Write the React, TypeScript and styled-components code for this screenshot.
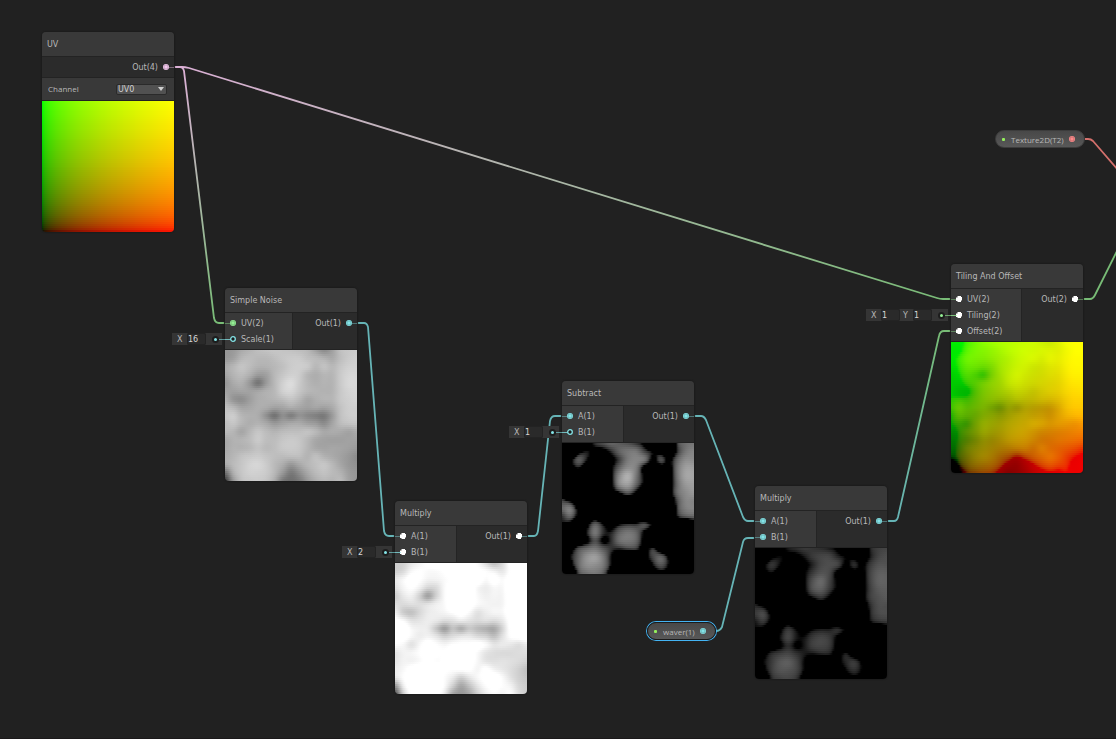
import React, { useId, useMemo } from "react";
import styled, { createGlobalStyle, css } from "styled-components";

const TEAL = "#84e4e7";
const GREEN = "#94ef94";
const PINK = "#f4c8ee";
const RED = "#ff8b8b";
const WHITE = "#ffffff";

const GlobalStyle = createGlobalStyle`
  * { box-sizing: border-box; }
  html, body { margin: 0; background: #212121; }
  body { overflow: hidden; }
  body, input, select {
    font-family: "DejaVu Sans", Verdana, sans-serif;
    font-size: 8px;
    line-height: 12px;
    color: #b8b8b8;
  }
`;

/* ---------- previews ---------- */

/* Noise height map: 17 x 17 lattice of display greys, top row first */
const LATTICE = [
  [150, 154, 170, 180, 190, 194, 198, 196, 194, 190, 184, 162, 140, 160, 192, 200, 202],
  [152, 160, 182, 188, 184, 184, 190, 198, 202, 202, 192, 186, 178, 170, 190, 202, 206],
  [170, 182, 196, 188, 178, 178, 184, 192, 203, 206, 202, 184, 194, 184, 198, 208, 208],
  [164, 180, 188, 176, 156, 160, 184, 198, 208, 204, 182, 174, 182, 182, 202, 214, 214],
  [150, 170, 176, 152, 118, 154, 184, 208, 220, 202, 184, 176, 180, 180, 202, 216, 216],
  [162, 160, 164, 162, 166, 176, 184, 208, 214, 198, 184, 180, 178, 180, 200, 212, 214],
  [176, 150, 142, 158, 172, 176, 180, 188, 196, 184, 166, 174, 180, 182, 200, 208, 212],
  [192, 184, 166, 168, 174, 170, 160, 164, 172, 166, 160, 164, 160, 170, 194, 206, 206],
  [198, 204, 182, 176, 172, 144, 114, 142, 126, 146, 136, 128, 122, 154, 192, 204, 206],
  [190, 198, 182, 174, 178, 168, 152, 162, 168, 170, 160, 154, 140, 164, 188, 196, 198],
  [186, 182, 166, 182, 197, 187, 180, 187, 190, 190, 194, 184, 168, 172, 170, 164, 172],
  [168, 178, 180, 188, 202, 190, 189, 198, 202, 198, 184, 168, 162, 160, 160, 162, 162],
  [168, 178, 178, 184, 194, 186, 190, 200, 202, 198, 182, 168, 164, 166, 164, 160, 154],
  [174, 182, 194, 200, 203, 196, 190, 188, 190, 190, 180, 191, 178, 170, 162, 152, 140],
  [168, 186, 198, 210, 214, 203, 186, 172, 152, 168, 182, 192, 198, 184, 166, 152, 144],
  [110, 174, 198, 208, 208, 202, 184, 152, 122, 142, 168, 186, 194, 186, 178, 158, 150],
  [60, 150, 192, 200, 202, 196, 172, 122, 110, 122, 152, 174, 184, 180, 186, 162, 150],
];

const clampIndex = (i: number) => Math.min(16, Math.max(0, i));

function cubic(a: number, b: number, c: number, d: number, t: number) {
  return b + 0.5 * t * (c - a + t * (2 * a - 5 * b + 4 * c - d + t * (3 * (b - c) + d - a)));
}

function toLinear(byte: number) {
  const c = byte / 255;
  return c <= 0.04045 ? c / 12.92 : Math.pow((c + 0.055) / 1.055, 2.4);
}

function toByte(linear: number) {
  const c = Math.min(1, Math.max(0, linear));
  const s = c <= 0.0031308 ? c * 12.92 : 1.055 * Math.pow(c, 1 / 2.4) - 0.055;
  return Math.round(s * 255);
}

function simpleNoise(u: number, v: number) {
  const x = u * 16;
  const y = (1 - v) * 16;
  const ix = Math.floor(x);
  const iy = Math.floor(y);
  const line = (j: number) => {
    const row = LATTICE[clampIndex(j)];
    return cubic(
      row[clampIndex(ix - 1)], row[clampIndex(ix)], row[clampIndex(ix + 1)], row[clampIndex(ix + 2)], x - ix,
    );
  };
  return toLinear(cubic(line(iy - 1), line(iy), line(iy + 1), line(iy + 2), y - iy));
}

type Shader = (u: number, v: number) => [number, number, number];
const WAVER = 0.32;
const grey = (n: number): [number, number, number] => [n, n, n];

const shaders: Record<string, Shader> = {
  uv: (u, v) => [u, v, 0],
  noise: (u, v) => grey(simpleNoise(u, v)),
  doubled: (u, v) => grey(simpleNoise(u, v) * 2),
  subtracted: (u, v) => grey(simpleNoise(u, v) * 2 - 1),
  waved: (u, v) => grey((simpleNoise(u, v) * 2 - 1) * WAVER),
  tiled: (u, v) => {
    const o = (simpleNoise(u, v) * 2 - 1) * WAVER;
    return [u + o, v + o, 0];
  },
};

const ROWS = 66;
const STOPS = 66;

const PreviewSvg = styled.svg`
  display: block;
  width: 100%;
  aspect-ratio: 132 / 131;
  border-radius: 0 0 4px 4px;
`;

function Preview({ shader }: { shader: string }) {
  const id = useId();
  const rows = useMemo(() => {
    const fn = shaders[shader];
    return Array.from({ length: ROWS }, (_, r) =>
      Array.from({ length: STOPS + 1 }, (_, s) => {
        const rgb = fn(s / STOPS, 1 - (r + 0.5) / ROWS).map(toByte);
        return `rgb(${rgb.join(",")})`;
      }),
    );
  }, [shader]);
  return (
    <PreviewSvg viewBox={`0 0 ${ROWS} ${ROWS}`} preserveAspectRatio="none" aria-hidden="true">
      <defs>
        {rows.map((stops, r) => (
          <linearGradient key={r} id={`${id}${r}`}>
            {stops.map((c, s) => (
              <stop key={s} offset={s / STOPS} stopColor={c} />
            ))}
          </linearGradient>
        ))}
      </defs>
      {rows.map((_, r) => (
        <rect key={r} y={r} width={ROWS} height="1" fill={`url(#${id}${r})`} shapeRendering="crispEdges" />
      ))}
    </PreviewSvg>
  );
}

/* ---------- ports ---------- */

type PortKind = "full" | "open" | "solid";

const PortSvg = styled.svg`
  display: block;
  flex: none;
  width: 8px;
  height: 8px;
`;

function Port({ color, kind = "full" }: { color: string; kind?: PortKind }) {
  return (
    <PortSvg viewBox="0 0 8 8" aria-hidden="true">
      {kind === "solid" && <path d="M2.500 1h3.500v1H7v3.500H6V7H2.500V6H1V2.500h1.500z" fill={color} />}
      {kind === "open" && <circle cx="4" cy="4" r="2.300" fill="#1c1c1c" stroke={color} strokeWidth="1.300" />}
      {kind === "full" && (
        <>
          <circle cx="4" cy="4" r="3" fill={color} />
          <circle cx="4" cy="4" r="2" fill="none" stroke="#222" strokeWidth="0.600" opacity="0.35" />
        </>
      )}
    </PortSvg>
  );
}

/* ---------- nodes ---------- */

const Canvas = styled.main`
  position: relative;
  min-height: 100vh;
  overflow: hidden;
  background: #212121;
  border-bottom: 1px solid #1b191a;
`;

const NodeBox = styled.section<{ $x: number; $y: number }>`
  position: absolute;
  left: ${(p) => p.$x}px;
  top: ${(p) => p.$y}px;
  width: 132px;
  border-radius: 4px;
  background: #2b2b2b;
  box-shadow: 0 0 1px 1px #1c1c1c;
`;

const NodeTitle = styled.h2`
  margin: 0;
  height: 24px;
  padding: 1px 5px 0;
  border-radius: 4px 4px 0 0;
  background: #393939;
  font-size: 8px;
  font-weight: 400;
  line-height: 24px;
`;

const PortArea = styled.div`
  display: flex;
  border-top: 1px solid #232323;
  border-bottom: 1px solid #232323;
`;

const InputColumn = styled.div<{ $width: number }>`
  width: ${(p) => p.$width}px;
  padding: 2px 4px;
  border-right: 1px solid #242424;
  background: #393939;
`;

const OutputColumn = styled.div`
  flex: 1;
  padding: 2px 4px;
`;

const PortRow = styled.div<{ $output?: boolean }>`
  position: relative;
  display: flex;
  align-items: center;
  gap: 4px;
  height: 16px;
  ${(p) => p.$output && css`justify-content: flex-end;`}
`;

const PortLabel = styled.span`
  padding-top: 2px;
`;

const Stub = styled.span<{ $color: string; $side: "left" | "right" }>`
  position: absolute;
  top: 8px;
  ${(p) => p.$side}: -4px;
  width: 5px;
  height: 1px;
  background: ${(p) => p.$color};
  opacity: 0.4;
`;

/* Inline default value shown beside an unconnected input */
const DefaultValue = styled.div<{ $color: string }>`
  position: absolute;
  top: 2px;
  right: calc(100% + 7px);
  display: flex;
  align-items: center;
  height: 12px;
  padding-right: 3px;
  background: #353535;
  &::after {
    content: "";
    position: absolute;
    left: calc(100% - 3px);
    top: 6px;
    width: 12px;
    height: 1px;
    background: ${(p) => p.$color};
    opacity: 0.6;
  }
`;

const ValueField = styled.label`
  display: flex;
  align-items: center;
  width: 34px;
  padding-left: 5px;
  & + & {
    width: 32px;
    padding-left: 3px;
  }
`;

const AxisName = styled.span`
  width: 10px;
  padding-top: 1px;
`;

const ValueInput = styled.input`
  width: 19px;
  height: 12px;
  padding: 1px 0 0 1px;
  border: 0;
  border-radius: 2px;
  background: #2a2a2a;
  box-shadow: inset 0 0 0 1px #232323;
  color: #d6d6d6;
  line-height: 11px;
  outline: none;
`;

const Socket = styled.span<{ $color: string }>`
  width: 7px;
  height: 7px;
  margin-left: 6px;
  border: 2px solid #1d1d1d;
  border-radius: 50%;
  background: ${(p) => p.$color};
`;

interface PortDef {
  label: string;
  color: string;
  kind?: PortKind;
  wire?: string;
  values?: [string, string][];
}

interface NodeDef {
  title: string;
  x: number;
  y: number;
  inputWidth: number;
  inputs: PortDef[];
  output: PortDef;
  shader: string;
  children?: React.ReactNode;
}

function GraphNode({ title, x, y, inputWidth, inputs, output, shader, children }: NodeDef) {
  return (
    <NodeBox $x={x} $y={y} aria-label={title}>
      <NodeTitle>{title}</NodeTitle>
      <PortArea>
        {inputs.length > 0 && (
          <InputColumn $width={inputWidth}>
            {inputs.map((p) => (
              <PortRow key={p.label}>
                {p.values && (
                  <DefaultValue $color={p.wire ?? p.color}>
                    {p.values.map(([axis, value]) => (
                      <ValueField key={axis}>
                        <AxisName>{axis}</AxisName>
                        <ValueInput defaultValue={value} />
                      </ValueField>
                    ))}
                    <Socket $color={p.wire ?? p.color} />
                  </DefaultValue>
                )}
                <Stub $side="left" $color={p.wire ?? p.color} />
                <Port color={p.color} kind={p.kind} />
                <PortLabel>{p.label}</PortLabel>
              </PortRow>
            ))}
          </InputColumn>
        )}
        <OutputColumn>
          <PortRow $output>
            <PortLabel>{output.label}</PortLabel>
            <Port color={output.color} kind={output.kind} />
            <Stub $side="right" $color={output.wire ?? output.color} />
          </PortRow>
        </OutputColumn>
      </PortArea>
      {children}
      <Preview shader={shader} />
    </NodeBox>
  );
}

const ChannelRow = styled.div`
  display: flex;
  align-items: center;
  justify-content: space-between;
  height: 23px;
  padding: 0 7px 0 6px;
  border-bottom: 1px solid #222;
  background: #393939;
`;

const ChannelLabel = styled.label`
  font-family: "Open Sans", "DejaVu Sans", sans-serif;
`;

const SelectWrap = styled.div`
  position: relative;
  display: flex;
  svg {
    position: absolute;
    right: 3px;
    top: 3px;
    width: 6px;
    height: 4px;
    pointer-events: none;
  }
`;

const ChannelSelect = styled.select`
  appearance: none;
  width: 51px;
  height: 11px;
  padding: 0 1px;
  border: 1px solid #2a2a2a;
  border-radius: 2px;
  background: #515151;
  color: #d0d0d0;
  line-height: 9px;
`;

/* ---------- property pills ---------- */

const Pill = styled.div<{ $x: number; $y: number; $selected?: boolean }>`
  position: absolute;
  left: ${(p) => p.$x}px;
  top: ${(p) => p.$y}px;
  display: flex;
  align-items: center;
  height: 18px;
  padding: 0 8px 0 6px;
  border: 1px solid ${(p) => (p.$selected ? "#1b1b1b" : "#3c3c3c")};
  border-radius: 9px;
  background: linear-gradient(#484848, #585858);
  ${(p) => p.$selected && css`box-shadow: 0 0 0 1px #44b4f4;`}
`;

const ExposedDot = styled.span`
  width: 3px;
  height: 3px;
  margin-right: 6px;
  border-radius: 1px;
  background: #94ef5c;
`;

const PillLabel = styled.span`
  margin-right: 4px;
  padding-top: 1px;
  font-family: "Open Sans", "DejaVu Sans", sans-serif;
`;

/* ---------- edges ---------- */

const EdgeLayer = styled.svg`
  position: absolute;
  left: 0;
  top: 0;
  width: 100%;
  height: 100%;
  fill: none;
  stroke-width: 1.8px;
`;

const T = "#66b4b6";
const G = "#78bc76";

function Edges() {
  return (
    <EdgeLayer aria-hidden="true">
      <defs>
        <linearGradient id="uv-tiling" gradientUnits="userSpaceOnUse" x1="174" y1="67" x2="951" y2="299">
          <stop offset="0" stopColor="#dcb0d6" />
          <stop offset="1" stopColor={G} />
        </linearGradient>
        <linearGradient id="uv-noise" gradientUnits="userSpaceOnUse" x1="184" y1="67" x2="215" y2="323">
          <stop offset="0" stopColor="#dcb0d6" />
          <stop offset="1" stopColor={G} />
        </linearGradient>
        <linearGradient id="mul-tiling" gradientUnits="userSpaceOnUse" x1="898" y1="521" x2="940" y2="331">
          <stop offset="0" stopColor={T} />
          <stop offset="1" stopColor={G} />
        </linearGradient>
      </defs>
      <path stroke="url(#uv-noise)" d="M174 67H180Q183 67 184 71L214 318Q215 323 219 323H226" />
      <path stroke="url(#uv-tiling)" d="M174 67H182Q185 67 189 68L937 298Q940 299 943 299H952" />
      <path stroke={T} d="M357 323H364Q367 323 368 327L384 531Q385 536 389 536H396" />
      <path stroke={T} d="M527 536H534Q537 536 538 531L550 421Q551 416 555 416H563" />
      <path stroke={T} d="M694 416H701Q704 416 706 420L743 517Q745 521 748 521H756" />
      <path stroke={T} d="M716 631Q720 631 722 627L743 542Q744 538 748 538H756" />
      <path stroke="url(#mul-tiling)" d="M887 521H894Q897 521 898 517L939 336Q940 331 944 331H952" />
      <path stroke={G} d="M1083 299H1090Q1093 299 1095 295L1118 249" />
      <path stroke="#d4706c" d="M1085 139H1088Q1091 139 1093 141L1118 170" />
    </EdgeLayer>
  );
}

export default function App() {
  return (
    <Canvas>
      <GlobalStyle />
      <Edges />
      <GraphNode
        title="UV" x={42} y={32} inputWidth={0} shader="uv" inputs={[]}
        output={{ label: "Out(4)", color: PINK }}
      >
        <ChannelRow>
          <ChannelLabel htmlFor="channel">Channel</ChannelLabel>
          <SelectWrap>
            <ChannelSelect id="channel" defaultValue="UV0">
              <option>UV0</option>
              <option>UV1</option>
              <option>UV2</option>
              <option>UV3</option>
            </ChannelSelect>
            <svg viewBox="0 0 6 4" aria-hidden="true"><path d="M0 0h6L3 4z" fill="#d0d0d0" /></svg>
          </SelectWrap>
        </ChannelRow>
      </GraphNode>
      <GraphNode
        title="Simple Noise" x={225} y={288} inputWidth={68} shader="noise"
        inputs={[
          { label: "UV(2)", color: GREEN },
          { label: "Scale(1)", color: TEAL, kind: "open", values: [["X", "16"]] },
        ]}
        output={{ label: "Out(1)", color: TEAL }}
      />
      <GraphNode
        title="Multiply" x={395} y={501} inputWidth={62} shader="doubled"
        inputs={[
          { label: "A(1)", color: WHITE, kind: "solid", wire: TEAL },
          { label: "B(1)", color: WHITE, kind: "solid", wire: TEAL, values: [["X", "2"]] },
        ]}
        output={{ label: "Out(1)", color: WHITE, kind: "solid", wire: TEAL }}
      />
      <GraphNode
        title="Subtract" x={562} y={381} inputWidth={62} shader="subtracted"
        inputs={[
          { label: "A(1)", color: TEAL },
          { label: "B(1)", color: TEAL, kind: "open", values: [["X", "1"]] },
        ]}
        output={{ label: "Out(1)", color: TEAL }}
      />
      <GraphNode
        title="Multiply" x={755} y={486} inputWidth={62} shader="waved"
        inputs={[
          { label: "A(1)", color: TEAL },
          { label: "B(1)", color: TEAL },
        ]}
        output={{ label: "Out(1)", color: TEAL }}
      />
      <GraphNode
        title="Tiling And Offset" x={951} y={264} inputWidth={71} shader="tiled"
        inputs={[
          { label: "UV(2)", color: WHITE, kind: "solid", wire: GREEN },
          { label: "Tiling(2)", color: WHITE, kind: "solid", wire: GREEN, values: [["X", "1"], ["Y", "1"]] },
          { label: "Offset(2)", color: WHITE, kind: "solid", wire: GREEN },
        ]}
        output={{ label: "Out(2)", color: WHITE, kind: "solid", wire: GREEN }}
      />
      <Pill $x={995} $y={130}>
        <ExposedDot />
        <PillLabel>Texture2D(T2)</PillLabel>
        <Port color={RED} />
      </Pill>
      <Pill $x={647} $y={622} $selected>
        <ExposedDot />
        <PillLabel>waver(1)</PillLabel>
        <Port color={TEAL} />
      </Pill>
    </Canvas>
  );
}
